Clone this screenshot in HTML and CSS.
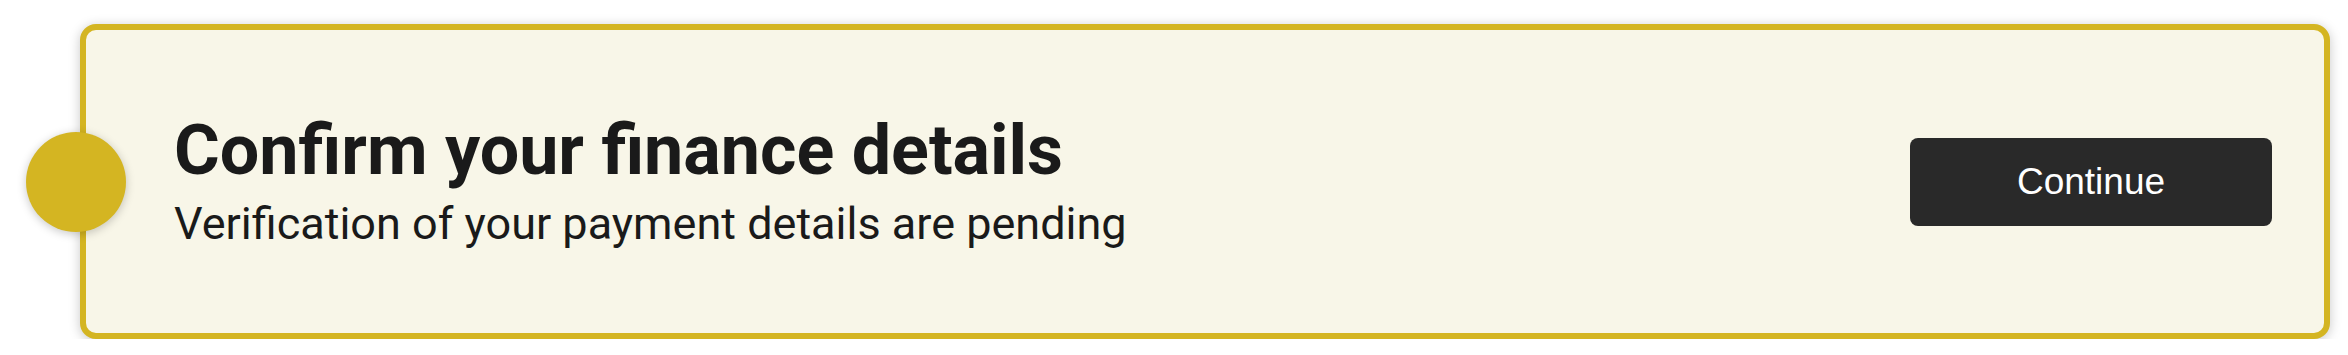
FILE: index.html
```html
<!DOCTYPE html>
<html lang="en">
<head>
<meta charset="utf-8">
<title>Confirm your finance details</title>
<link rel="stylesheet" href="styles.css">
</head>
<body>
<div class="page">
  <section class="card">
    <span class="dot" aria-hidden="true"></span>
    <div class="text">
      <h2 class="title">Confirm your finance details</h2>
      <p class="subtitle">Verification of your payment details are pending</p>
    </div>
    <button class="btn" type="button">Continue</button>
  </section>
</div>
</body>
</html>
```
FILE: styles.css
```css
html, body {
  margin: 0;
  padding: 0;
  background: #ffffff;
}

.page {
  padding: 24px 0 0 80px;
}

.card {
  position: relative;
  box-sizing: border-box;
  width: 2250px;
  height: 315px;
  border: 6px solid #d4b522;
  border-radius: 16px;
  background: #f8f6e8;
  box-shadow: 0 2px 12px rgba(0, 0, 0, 0.22);
  display: flex;
  align-items: center;
  justify-content: space-between;
  padding: 0 52px 0 88px;
}

.dot {
  position: absolute;
  left: -60px;
  top: 50%;
  width: 100px;
  height: 100px;
  margin-top: -50px;
  border-radius: 50%;
  background: #d4b522;
  box-shadow: 0 2px 10px rgba(0, 0, 0, 0.22);
}

.text {
  display: flex;
  flex-direction: column;
  padding-bottom: 4px;
}

.title {
  margin: 0;
  font-family: Roboto, "Liberation Sans", sans-serif;
  font-weight: 700;
  font-size: 70px;
  line-height: 80px;
  color: #1a1a1a;
}

.subtitle {
  margin: 8px 0 0;
  font-family: Roboto, "Liberation Sans", sans-serif;
  font-weight: 400;
  font-size: 45px;
  line-height: 52px;
  color: #1a1a1a;
}

.btn {
  box-sizing: border-box;
  width: 362px;
  height: 88px;
  border: none;
  border-radius: 8px;
  background: #292929;
  color: #ffffff;
  font-family: "Liberation Sans", Arial, sans-serif;
  font-size: 37px;
  padding: 0;
  cursor: pointer;
}
```
